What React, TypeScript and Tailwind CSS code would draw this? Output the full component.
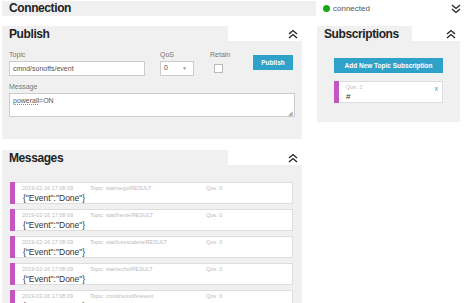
import React from 'react';

const font = { fontFamily: '"Liberation Sans", Arial, sans-serif' };

function Chevrons({ up }: { up?: boolean }) {
  return (
    <svg width="10" height="10" viewBox="0 0 10 10" className="text-[#222]">
      {up ? (
        <g fill="none" stroke="currentColor" strokeWidth="1.3">
          <polyline points="1,5 5,1.5 9,5" />
          <polyline points="1,9 5,5.5 9,9" />
        </g>
      ) : (
        <g fill="none" stroke="currentColor" strokeWidth="1.3">
          <polyline points="1,1 5,4.5 9,1" />
          <polyline points="1,5 5,8.5 9,5" />
        </g>
      )}
    </svg>
  );
}

const messages = [
  'stat/nego/RESULT',
  'stat/frente/RESULT',
  'stat/luzescalera/RESULT',
  'stat/techo/RESULT',
  'cmnd/sonoffs/event',
];

function SectionHead({ title, tabW }: { title: string; tabW: string }) {
  return (
    <div className="flex items-stretch h-[15px]">
      <div className={`${tabW} bg-[#f0f0f0] pl-[7px] text-[12px] tracking-[-0.4px] font-bold leading-[16px] text-[#222]`}>{title}</div>
      <div className="flex-1 flex items-center justify-end pr-[4px]">
        <Chevrons up />
      </div>
    </div>
  );
}

export default function App() {
  return (
    <div className="w-[474px] h-[303px] bg-white overflow-hidden" style={font}>
      <div className="flex items-center pt-px">
        <div className="ml-[2px] w-[314px] h-[15px] bg-[#f0f0f0] pl-[7px] text-[12px] tracking-[-0.4px] font-bold leading-[15px] text-[#222]">
          Connection
        </div>
        <div className="flex-1 flex items-center pl-[7px] pr-[13px]">
          <span className="w-[7px] h-[7px] rounded-full bg-[#1aa51a]" />
          <span className="ml-[3px] text-[8px] text-[#555]">connected</span>
          <span className="ml-auto flex">
            <Chevrons />
          </span>
        </div>
      </div>

      <div className="flex mt-[10px]">
        <div className="ml-[2px] w-[300px]">
          <SectionHead title="Publish" tabW="w-[226px]" />
          <div className="bg-[#f0f0f0] h-[98px] px-[7px] pt-[9px]">
            <div className="flex text-[7px] text-[#777]">
              <div className="w-[136px]">
                <div className="leading-[10px]">Topic</div>
                <div className="mt-[1px] h-[15px] bg-white border border-[#ccc] pl-[3px] leading-[13px] text-[#555]">cmnd/sonoffs/event</div>
              </div>
              <div className="ml-[15px] w-[34px]">
                <div className="leading-[10px]">QoS</div>
                <div className="mt-[1px] h-[15px] bg-white border border-[#ccc] pl-[3px] flex items-center text-[#555]">
                  <span>0</span>
                  <span className="ml-auto mr-[6px] text-[5px] text-[#999]">▼</span>
                </div>
              </div>
              <div className="ml-[16px] w-[30px]">
                <div className="leading-[10px]">Retain</div>
                <div className="mt-[4px] ml-[4px] w-[9px] h-[9px] bg-white border border-[#bbb]" />
              </div>
              <div className="ml-auto mr-[2px] pt-[5px]">
                <div className="w-[40px] h-[15px] bg-[#2ea2c8] text-white text-[6.5px] font-bold flex items-center justify-center">Publish</div>
              </div>
            </div>
            <div className="mt-[6px] text-[7px] text-[#777] leading-[10px]">Message</div>
            <div className="mt-[1px] w-[286px] h-[24px] bg-white border border-[#ccc] pl-[3px] pt-[2px] text-[7px] text-[#555] relative">
              <span className="underline decoration-dotted decoration-[#e06060]">powerall</span>=ON
              <span className="absolute right-[1px] bottom-[0px] text-[6px] text-[#aaa] leading-none">◢</span>
            </div>
          </div>

          <div className="mt-[11px]">
            <SectionHead title="Messages" tabW="w-[226px]" />
            <div className="bg-[#f0f0f0] h-[140px] pl-[8px] pr-[9px] pt-[17px] flex flex-col gap-[5px]">
              {messages.map((t, i) => (
                <div key={i} className="flex h-[22px] bg-white border border-[#ddd] shrink-0">
                  <div className="w-[5px] bg-[#c456c4] -my-px -ml-px" />
                  <div className="flex-1 pl-[7px]">
                    <div className="flex text-[5.5px] text-[#bbb] leading-[9px] pt-[1px]">
                      <span className="w-[68px]">2019-02-16 17:08:09</span>
                      <span className="w-[116px]">Topic: {t}</span>
                      <span>Qos: 0</span>
                    </div>
                    <div className="text-[8.5px] text-[#333] leading-[11px] pl-[1px]">{'{"Event":"Done"}'}</div>
                  </div>
                </div>
              ))}
            </div>
          </div>
        </div>

        <div className="ml-[15px] w-[143px]">
          <SectionHead title="Subscriptions" tabW="w-[95px]" />
          <div className="bg-[#f0f0f0] h-[81px] pt-[17px] px-[17px]">
            <div className="h-[15px] bg-[#2ea2c8] text-white text-[6.5px] font-bold flex items-center justify-center">Add New Topic Subscription</div>
            <div className="mt-[8px] h-[22px] flex bg-white border border-[#ddd]">
              <div className="w-[5px] bg-[#c456c4] -my-px -ml-px" />
              <div className="flex-1 pl-[7px] relative">
                <div className="text-[5.5px] text-[#bbb] leading-[9px] pt-[1px]">Qos: 2</div>
                <div className="text-[8px] text-[#333] leading-[10px]">#</div>
                <span className="absolute right-[4px] top-[2px] text-[7px] text-[#2ea2c8]">x</span>
              </div>
            </div>
          </div>
        </div>
      </div>
    </div>
  );
}
